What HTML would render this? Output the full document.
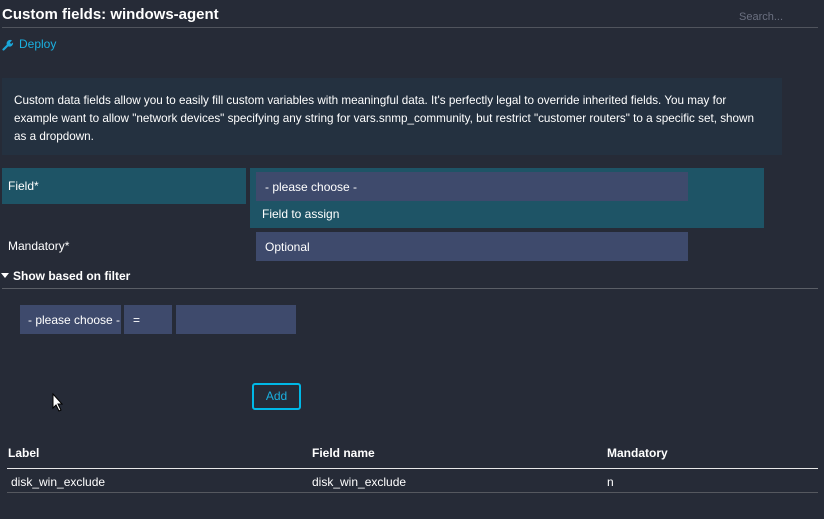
<!DOCTYPE html>
<html><head><style>
body{margin:0;width:824px;height:519px;background:#262b37;font-family:"Liberation Sans",sans-serif;color:#fff;font-size:12px;position:relative;overflow:hidden}
.a{position:absolute;white-space:nowrap}
.in{position:absolute;background:#3e4a6c;color:#fff;font-size:12px;box-sizing:border-box;padding-left:9px;display:flex;align-items:center;white-space:nowrap;overflow:hidden}
</style></head><body>
<div class="a" style="left:2px;top:6px;font-size:15px;font-weight:bold">Custom fields: windows-agent</div>
<div class="a" style="left:2px;top:27px;width:816px;height:1px;background:#50545d"></div>
<div class="a" style="left:739px;top:11px;font-size:11px;color:#6b7080">Search...</div>
<svg class="a" style="left:2px;top:39px" width="12" height="12" viewBox="0 0 12 12"><path d="M1.5 10.5 L6 6" stroke="#1aa6d8" stroke-width="2.2" fill="none" stroke-linecap="round"/><path d="M5 6 A3.5 3.5 0 0 1 10 1.5 L8 3.5 L9 5 L11 3.5 A3.5 3.5 0 0 1 6.5 7.5 Z" fill="#1aa6d8"/></svg>
<div class="a" style="left:19px;top:37px;color:#1ab0e0;font-size:12px">Deploy</div>
<div class="a" style="left:2px;top:78px;width:780px;height:77px;background:#243140"></div>
<div class="a" style="left:14px;top:92px;width:748px;line-height:18px;font-size:11.7px;white-space:normal">Custom data fields allow you to easily fill custom variables with meaningful data. It's perfectly legal to override inherited fields. You may for example want to allow "network devices" specifying any string for vars.snmp_community, but restrict "customer routers" to a specific set, shown as a dropdown.</div>
<div class="a" style="left:2px;top:168px;width:244px;height:36px;background:#1e5466"></div>
<div class="a" style="left:8px;top:179px">Field*</div>
<div class="a" style="left:250px;top:168px;width:514px;height:60px;background:#1e5466"></div>
<div class="in" style="left:256px;top:172px;width:432px;height:29px">- please choose -</div>
<div class="a" style="left:262px;top:207px">Field to assign</div>
<div class="a" style="left:8px;top:239px">Mandatory*</div>
<div class="in" style="left:256px;top:232px;width:432px;height:29px">Optional</div>
<svg class="a" style="left:1px;top:272px" width="9" height="8"><path d="M0 1 L8 1 L4 6 Z" fill="#fff"/></svg>
<div class="a" style="left:13px;top:269px;font-weight:bold;font-size:12px">Show based on filter</div>
<div class="a" style="left:2px;top:288px;width:816px;height:1px;background:#5a5e66"></div>
<div class="in" style="left:20px;top:305px;width:101px;height:29px;padding-left:8px">- please choose -</div>
<div class="in" style="left:124px;top:305px;width:48px;height:29px">=</div>
<div class="in" style="left:176px;top:305px;width:120px;height:29px"></div>
<div class="a" style="left:252px;top:383px;width:49px;height:27px;box-sizing:border-box;border:2px solid #00b8e6;border-radius:3px;color:#1ab0e0;text-align:center;line-height:23px">Add</div>
<svg class="a" style="left:52px;top:393px" width="12" height="19" viewBox="0 0 12 19"><path d="M1 1 L1 15 L4 12 L7 18 L9 17 L6 11 L10 11 Z" fill="#fff" stroke="#000" stroke-width="1"/></svg>
<div class="a" style="left:8px;top:446px;font-weight:bold">Label</div>
<div class="a" style="left:312px;top:446px;font-weight:bold">Field name</div>
<div class="a" style="left:607px;top:446px;font-weight:bold">Mandatory</div>
<div class="a" style="left:7px;top:468px;width:811px;height:1px;background:#e8e8e8"></div>
<div class="a" style="left:11px;top:475px">disk_win_exclude</div>
<div class="a" style="left:312px;top:475px">disk_win_exclude</div>
<div class="a" style="left:607px;top:475px">n</div>
<div class="a" style="left:7px;top:492px;width:811px;height:1px;background:#55585f"></div>
</body></html>
